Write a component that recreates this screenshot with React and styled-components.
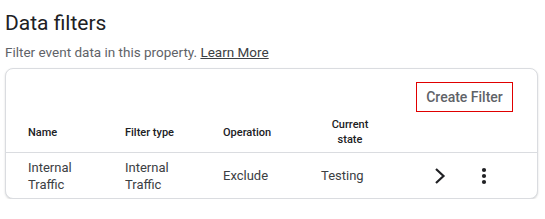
import React from "react";
import styled, { createGlobalStyle } from "styled-components";

const Global = createGlobalStyle`
  html, body { margin: 0; padding: 0; background: #fff; }
  body { font-family: Roboto, "Noto Sans", Arial, sans-serif; -webkit-font-smoothing: antialiased; }
`;

const Page = styled.div`
  width: 545px;
  padding: 10px 7px 0 5px;
  box-sizing: border-box;
`;

const Title = styled.h1`
  margin: 0;
  font-size: 21px;
  font-weight: 400;
  line-height: 26px;
  color: #202124;
`;

const Subtitle = styled.p`
  margin: 7px 0 0;
  font-size: 13.5px;
  line-height: 18px;
  color: #5f6368;
`;

const Link = styled.a`
  color: #3c4043;
  text-decoration: underline;
  cursor: pointer;
`;

const Card = styled.div`
  margin-top: 7px;
  border: 1px solid #dadce0;
  border-radius: 8px;
  box-shadow: 0 1px 2px rgba(60, 64, 67, 0.2);
  background: #fff;
`;

const Toolbar = styled.div`
  display: flex;
  justify-content: flex-end;
  padding: 13px 24px 0 0;
`;

const Button = styled.button`
  height: 30px;
  width: 97px;
  border: 1px solid #e00000;
  background: #fff;
  color: #5f6368;
  font-family: Roboto, Arial, sans-serif;
  font-size: 14px;
  font-weight: 500;
  padding: 0;
`;

const Row = styled.div`
  display: grid;
  grid-template-columns: 97px 98px 98px 98px 42px 46px;
  align-items: center;
  padding-left: 22px;
  height: ${(p) => p.$h}px;
  border-bottom: ${(p) => (p.$divider ? "1px solid #dadce0" : "none")};
`;

const HeadCell = styled.div`
  font-size: 11px;
  font-weight: 500;
  line-height: 15px;
  color: #202124;
  ${(p) => p.$center && "width: 58px; text-align: center;"}
`;

const Cell = styled.div`
  font-size: 13px;
  line-height: 17px;
  color: #3c4043;
  padding-right: 20px;
`;

const IconCell = styled.div`
  display: flex;
  justify-content: center;
  align-items: center;
  color: #202124;
`;

export default function App() {
  return (
    <>
      <Global />
      <Page>
        <Title>Data filters</Title>
        <Subtitle>
          Filter event data in this property. <Link>Learn More</Link>
        </Subtitle>
        <Card>
          <Toolbar>
            <Button>Create Filter</Button>
          </Toolbar>
          <Row $h={40} $divider>
            <HeadCell>Name</HeadCell>
            <HeadCell>Filter type</HeadCell>
            <HeadCell>Operation</HeadCell>
            <HeadCell $center>Current state</HeadCell>
            <div />
            <div />
          </Row>
          <Row $h={45}>
            <Cell>Internal Traffic</Cell>
            <Cell>Internal Traffic</Cell>
            <Cell>Exclude</Cell>
            <Cell>Testing</Cell>
            <IconCell>
              <svg width="14" height="18" viewBox="0 0 14 18">
                <path d="M3 2 L10.5 9 L3 16" fill="none" stroke="currentColor" strokeWidth="2.2" />
              </svg>
            </IconCell>
            <IconCell>
              <svg width="8" height="18" viewBox="0 0 8 18">
                <circle cx="4" cy="3" r="2.1" fill="currentColor" />
                <circle cx="4" cy="9" r="2.1" fill="currentColor" />
                <circle cx="4" cy="15" r="2.1" fill="currentColor" />
              </svg>
            </IconCell>
          </Row>
        </Card>
      </Page>
    </>
  );
}
